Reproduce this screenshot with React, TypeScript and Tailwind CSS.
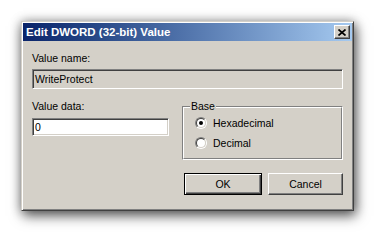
import React from 'react';

const font = { fontFamily: '"Liberation Sans", Arial, sans-serif' };

const Radio: React.FC<{ checked?: boolean; label: string }> = ({ checked, label }) => (
  <div className="flex items-center h-[20px]">
    {/* classic sunken radio circle */}
    <div className="w-[12px] h-[12px] rounded-full border border-t-[#808080] border-l-[#808080] border-r-white border-b-white">
      <div className="w-full h-full rounded-full border border-t-[#404040] border-l-[#404040] border-r-[#d4d0c8] border-b-[#d4d0c8] bg-white flex items-center justify-center">
        {checked && <div className="w-[4px] h-[4px] rounded-full bg-black" />}
      </div>
    </div>
    <span className="ml-[6px] leading-[13px]">{label}</span>
  </div>
);

export default function App() {
  return (
    <div className="w-[375px] h-[232px] bg-white pl-[21px] pt-[21px] text-[10.5px] text-black" style={font}>
      <div className="w-[333px] h-[190px] bg-[#d4d0c8] border border-t-[#d4d0c8] border-l-[#d4d0c8] border-r-[#404040] border-b-[#404040] p-[1px] shadow-[inset_1px_1px_0_#fff,inset_-1px_-1px_0_#808080,2px_5px_12px_rgba(0,0,0,0.6),0_0_10px_rgba(0,0,0,0.3)] flex flex-col">
        {/* Title bar */}
        <div className="h-[18px] flex items-center bg-gradient-to-r from-[#0a246a] to-[#a6caf0] pl-[3px] pr-[2px]">
          <span className="flex-1 text-white font-bold text-[11.5px] leading-[18px]">Edit DWORD (32-bit) Value</span>
          <button className="w-[16px] h-[14px] bg-[#d4d0c8] border border-t-white border-l-white border-r-[#404040] border-b-[#404040] shadow-[inset_-1px_-1px_0_#808080] flex items-center justify-center">
            <svg width="8" height="7" viewBox="0 0 8 7">
              <path d="M0.5 0.5 L7.5 6.5 M7.5 0.5 L0.5 6.5" stroke="#000" strokeWidth="1.7" />
            </svg>
          </button>
        </div>

        {/* Body */}
        <div className="flex-1 px-[9px] pt-[11px] flex flex-col">
          <div className="h-[13px] leading-[13px]">Value name:</div>
          <div className="mt-[4px] h-[20px] border border-t-[#808080] border-l-[#808080] border-r-white border-b-white shadow-[inset_1px_1px_0_#404040,inset_-1px_-1px_0_#d4d0c8] bg-[#d4d0c8] flex items-center pl-[2px]">
            <span className="leading-[13px]">WriteProtect</span>
          </div>

          <div className="flex gap-[13px]">
            <div className="w-[137px] flex flex-col">
              <div className="mt-[11px] h-[13px] leading-[13px]">Value data:</div>
              <div className="mt-[5px] h-[18px] border border-t-[#808080] border-l-[#808080] border-r-white border-b-white shadow-[inset_1px_1px_0_#404040,inset_-1px_-1px_0_#d4d0c8] bg-white flex items-center pl-[2px]">
                <span className="leading-[13px]">0</span>
              </div>
            </div>

            {/* Base group box */}
            <div className="relative mt-[17px] w-[161px] h-[54px] border border-t-[#808080] border-l-[#808080] border-r-white border-b-white">
              <div className="h-full border border-t-white border-l-white border-r-[#808080] border-b-[#808080] pl-[11px] pt-[5px]">
                <Radio checked label="Hexadecimal" />
                <Radio label="Decimal" />
              </div>
              <span className="absolute left-[7px] top-[-7px] bg-[#d4d0c8] px-[1px] leading-[13px]">Base</span>
            </div>
          </div>

          <div className="mt-[13px] flex justify-end gap-[6px]">
            <button className="w-[78px] h-[22px] bg-[#d4d0c8] border border-black shadow-[inset_1px_1px_0_#fff,inset_-1px_-1px_0_#404040,inset_-2px_-2px_0_#808080] leading-[13px]">
              OK
            </button>
            <button className="w-[75px] h-[22px] bg-[#d4d0c8] border border-t-white border-l-white border-r-[#404040] border-b-[#404040] shadow-[inset_-1px_-1px_0_#808080] leading-[13px]">
              Cancel
            </button>
          </div>
        </div>
      </div>
    </div>
  );
}
